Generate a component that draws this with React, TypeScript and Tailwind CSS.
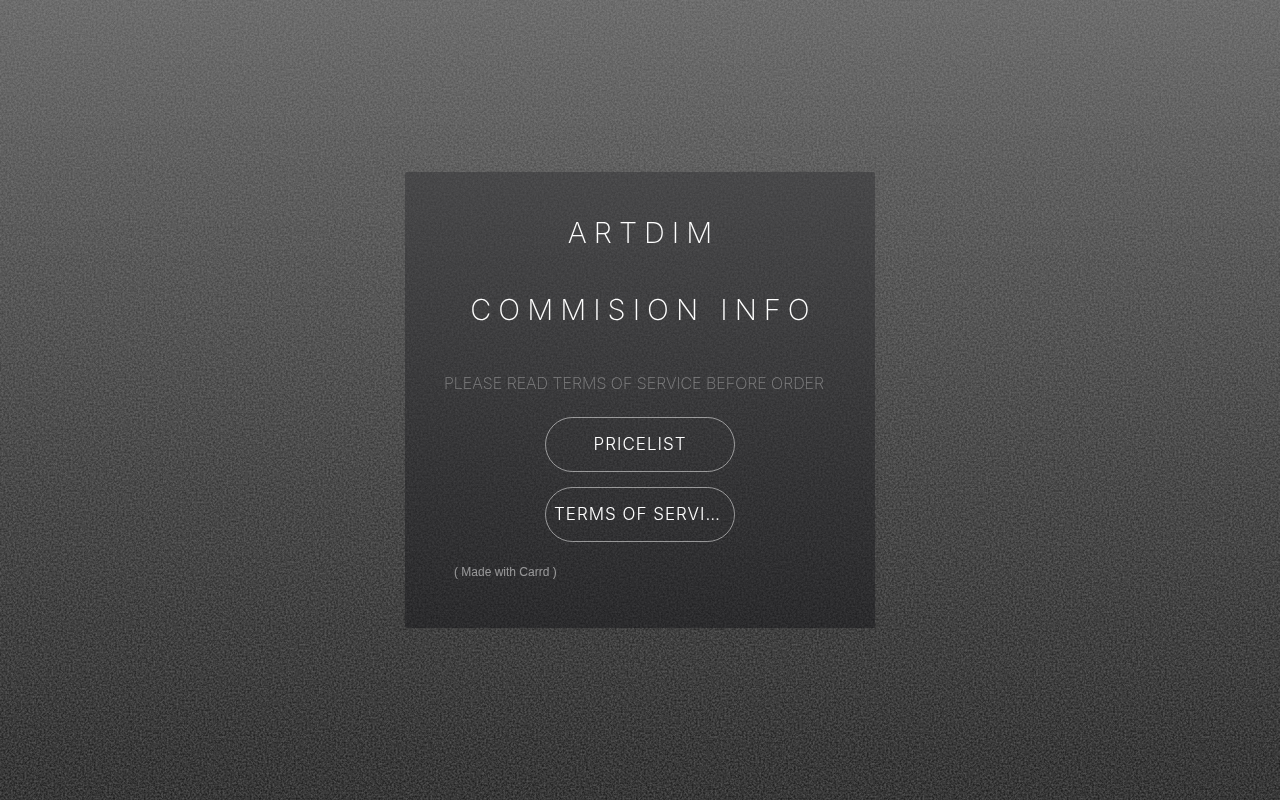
const links = [
  { label: "PRICELIST", href: "#pricelist" },
  { label: "TERMS OF SERVICE", href: "#terms" },
];

function LeatherTexture() {
  return (
    <svg aria-hidden="true" className="pointer-events-none absolute inset-0 h-full w-full">
      <defs>
        <filter id="grain" x="0" y="0" width="100%" height="100%" colorInterpolationFilters="sRGB">
          <feTurbulence type="fractalNoise" baseFrequency="0.52" numOctaves="2" seed="8" />
          <feColorMatrix values="1.6 0 0 0 -0.3  1.6 0 0 0 -0.3  1.6 0 0 0 -0.3  0 0 0 0 1" />
        </filter>
        <linearGradient id="fade" x1="0" y1="0" x2="0" y2="1">
          <stop offset="0" stopColor="#fff" stopOpacity="0.1" />
          <stop offset="1" stopColor="#fff" stopOpacity="0.2" />
        </linearGradient>
        <mask id="depth">
          <rect width="100%" height="100%" fill="url(#fade)" />
        </mask>
      </defs>
      <g mask="url(#depth)">
        <rect width="100%" height="100%" filter="url(#grain)" />
      </g>
    </svg>
  );
}

export default function App() {
  return (
    <div className="relative flex min-h-screen items-center justify-center bg-linear-to-b from-[#6b6b6b] to-[#262626] font-['Inter',sans-serif]">
      <LeatherTexture />
      <main className="relative w-full max-w-[470px] rounded-[2px] bg-linear-to-b from-[#323235]/50 to-[#16161a]/50 px-10 pt-10 pb-12 text-center will-change-transform">
        <h1 className="pl-[7px] text-[29px] leading-[42px] font-extralight tracking-[7px] text-white">ARTDIM</h1>
        <h2 className="mt-[35px] pl-[7px] text-[29px] leading-[42px] font-extralight tracking-[7px] whitespace-nowrap text-white">
          COMMISION INFO
        </h2>
        <p className="mt-10 -ml-3 text-base leading-6 font-extralight whitespace-nowrap text-white/35">
          PLEASE READ TERMS OF SERVICE BEFORE ORDER
        </p>
        <nav className="mt-[22px] flex flex-col items-center gap-[15px]">
          {links.map((link) => (
            <a
              key={link.href}
              href={link.href}
              className="block h-[55px] w-[190px] truncate rounded-full border border-white/50 px-2 text-[17px] leading-[53px] font-light tracking-[1px] text-white"
            >
              {link.label}
            </a>
          ))}
        </nav>
        <p className="mt-[22px] px-[9px] text-left font-['Liberation_Sans',sans-serif] text-[12px] leading-4 text-white/50">
          <a href="https://carrd.co">( Made with Carrd )</a>
        </p>
      </main>
    </div>
  );
}
